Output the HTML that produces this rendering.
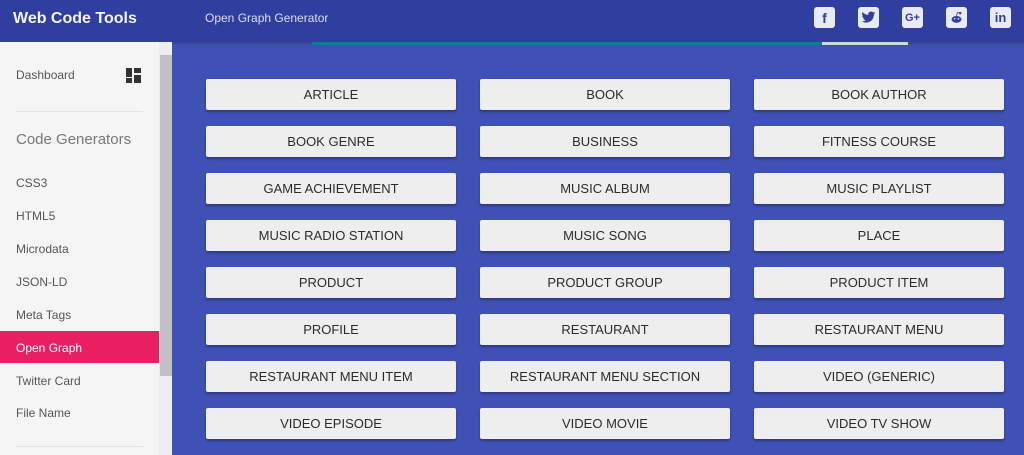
<!DOCTYPE html>
<html><head><style>
*{margin:0;padding:0;box-sizing:border-box}
body{width:1024px;height:455px;overflow:hidden;font-family:"Liberation Sans",sans-serif;background:#3f51b5;position:relative}
.hdr{position:absolute;left:0;top:0;width:1024px;height:42px;background:#303f9f;box-shadow:0 1px 3px rgba(0,0,0,.3)}
.logo{position:absolute;left:13px;top:10px;color:#fff;font-size:16px;font-weight:bold;opacity:.95}
.sub{position:absolute;left:205px;top:11px;color:#dde;font-size:12px}
.strip{position:absolute;top:42px;left:312px;width:510px;height:3px;background:#00838f}
.strip2{position:absolute;top:42px;left:822px;width:86px;height:3px;background:#cfd8dc}
.ico{position:absolute;top:7px;width:21px;height:21px;background:#e8eaf6;border-radius:3px;color:#303f9f;font-weight:bold;font-size:14px;text-align:center;line-height:22px}
.ico svg{position:absolute;left:3px;top:3px}
.side{position:absolute;left:0;top:42px;width:159px;height:413px;background:#f5f5f5}
.sb{position:absolute;left:159px;top:42px;width:13px;height:413px;background:#eee}
.thumb{position:absolute;left:160px;top:55px;width:12px;height:321px;background:#c1c1c1}
.it{position:absolute;left:16px;font-size:12px;color:#555}
.hl{position:absolute;left:0;top:331px;width:159px;height:32px;background:#e91e63}
.line{position:absolute;left:16px;width:127px;height:1px;background:#e4e4e4}
.btn{position:absolute;width:250px;height:31px;background:#eeeeee;border-radius:2px;box-shadow:0 2px 2px rgba(0,0,0,.3);font-size:13px;color:#2b2b2b;text-align:center;line-height:31px}
</style></head><body>
<div class="hdr">
<div class="logo">Web Code Tools</div>
<div class="sub">Open Graph Generator</div>
<div class="ico" style="left:814px;">f</div>
<div class="ico" style="left:858px"><svg width="15" height="15" viewBox="0 0 24 24"><path fill="#303f9f" d="M23 4.6c-.8.4-1.7.6-2.6.7.9-.6 1.6-1.4 2-2.5-.9.5-1.9.9-2.9 1.1C18.6 3 17.4 2.4 16 2.4c-2.5 0-4.5 2-4.5 4.5 0 .4 0 .7.1 1C7.8 7.7 4.5 5.9 2.3 3.2c-.4.7-.6 1.5-.6 2.3 0 1.6.8 2.9 2 3.7-.7 0-1.4-.2-2-.6v.1c0 2.2 1.6 4 3.6 4.4-.4.1-.8.2-1.2.2-.3 0-.6 0-.8-.1.6 1.8 2.2 3.1 4.2 3.1-1.5 1.2-3.5 1.9-5.6 1.9H1c2 1.3 4.4 2 6.9 2 8.3 0 12.8-6.9 12.8-12.8v-.6c.9-.6 1.7-1.4 2.3-2.3z"/></svg></div>
<div class="ico" style="left:902px;font-size:11px">G+</div>
<div class="ico" style="left:946px"><svg width="15" height="15" viewBox="0 0 24 24"><ellipse cx="12" cy="15" rx="8" ry="5.5" fill="#303f9f"/><circle cx="18" cy="5" r="2" fill="#303f9f"/><path d="M12 9.5 13.5 4 18 5" stroke="#303f9f" stroke-width="1.3" fill="none"/><circle cx="9" cy="14" r="1.3" fill="#e8eaf6"/><circle cx="15" cy="14" r="1.3" fill="#e8eaf6"/></svg></div>
<div class="ico" style="left:990px;font-size:13px">in</div>
</div>
<div class="strip"></div><div class="strip2"></div>
<div class="side"></div>
<div class="sb"></div><div class="thumb"></div>
<div class="it" style="top:68px">Dashboard</div>
<svg style="position:absolute;left:126px;top:68px" width="15" height="15"><rect x="0" y="0" width="6" height="9" fill="#333"/><rect x="8" y="0" width="7" height="5" fill="#333"/><rect x="0" y="10" width="6" height="5" fill="#333"/><rect x="8" y="7" width="7" height="8" fill="#333"/></svg>
<div class="line" style="top:111px"></div>
<div class="it" style="top:131px;font-size:15px;color:#777">Code Generators</div>
<div class="it" style="top:176px">CSS3</div>
<div class="it" style="top:209px">HTML5</div>
<div class="it" style="top:242px">Microdata</div>
<div class="it" style="top:275px">JSON-LD</div>
<div class="it" style="top:308px">Meta Tags</div>
<div class="hl"></div>
<div class="it" style="top:341px;color:#fff">Open Graph</div>
<div class="it" style="top:374px">Twitter Card</div>
<div class="it" style="top:406px">File Name</div>
<div class="line" style="top:446px"></div>

<div class="btn" style="left:206px;top:79px">ARTICLE</div>
<div class="btn" style="left:480px;top:79px">BOOK</div>
<div class="btn" style="left:754px;top:79px">BOOK AUTHOR</div>
<div class="btn" style="left:206px;top:126px">BOOK GENRE</div>
<div class="btn" style="left:480px;top:126px">BUSINESS</div>
<div class="btn" style="left:754px;top:126px">FITNESS COURSE</div>
<div class="btn" style="left:206px;top:173px">GAME ACHIEVEMENT</div>
<div class="btn" style="left:480px;top:173px">MUSIC ALBUM</div>
<div class="btn" style="left:754px;top:173px">MUSIC PLAYLIST</div>
<div class="btn" style="left:206px;top:220px">MUSIC RADIO STATION</div>
<div class="btn" style="left:480px;top:220px">MUSIC SONG</div>
<div class="btn" style="left:754px;top:220px">PLACE</div>
<div class="btn" style="left:206px;top:267px">PRODUCT</div>
<div class="btn" style="left:480px;top:267px">PRODUCT GROUP</div>
<div class="btn" style="left:754px;top:267px">PRODUCT ITEM</div>
<div class="btn" style="left:206px;top:314px">PROFILE</div>
<div class="btn" style="left:480px;top:314px">RESTAURANT</div>
<div class="btn" style="left:754px;top:314px">RESTAURANT MENU</div>
<div class="btn" style="left:206px;top:361px">RESTAURANT MENU ITEM</div>
<div class="btn" style="left:480px;top:361px">RESTAURANT MENU SECTION</div>
<div class="btn" style="left:754px;top:361px">VIDEO (GENERIC)</div>
<div class="btn" style="left:206px;top:408px">VIDEO EPISODE</div>
<div class="btn" style="left:480px;top:408px">VIDEO MOVIE</div>
<div class="btn" style="left:754px;top:408px">VIDEO TV SHOW</div>
</body></html>
